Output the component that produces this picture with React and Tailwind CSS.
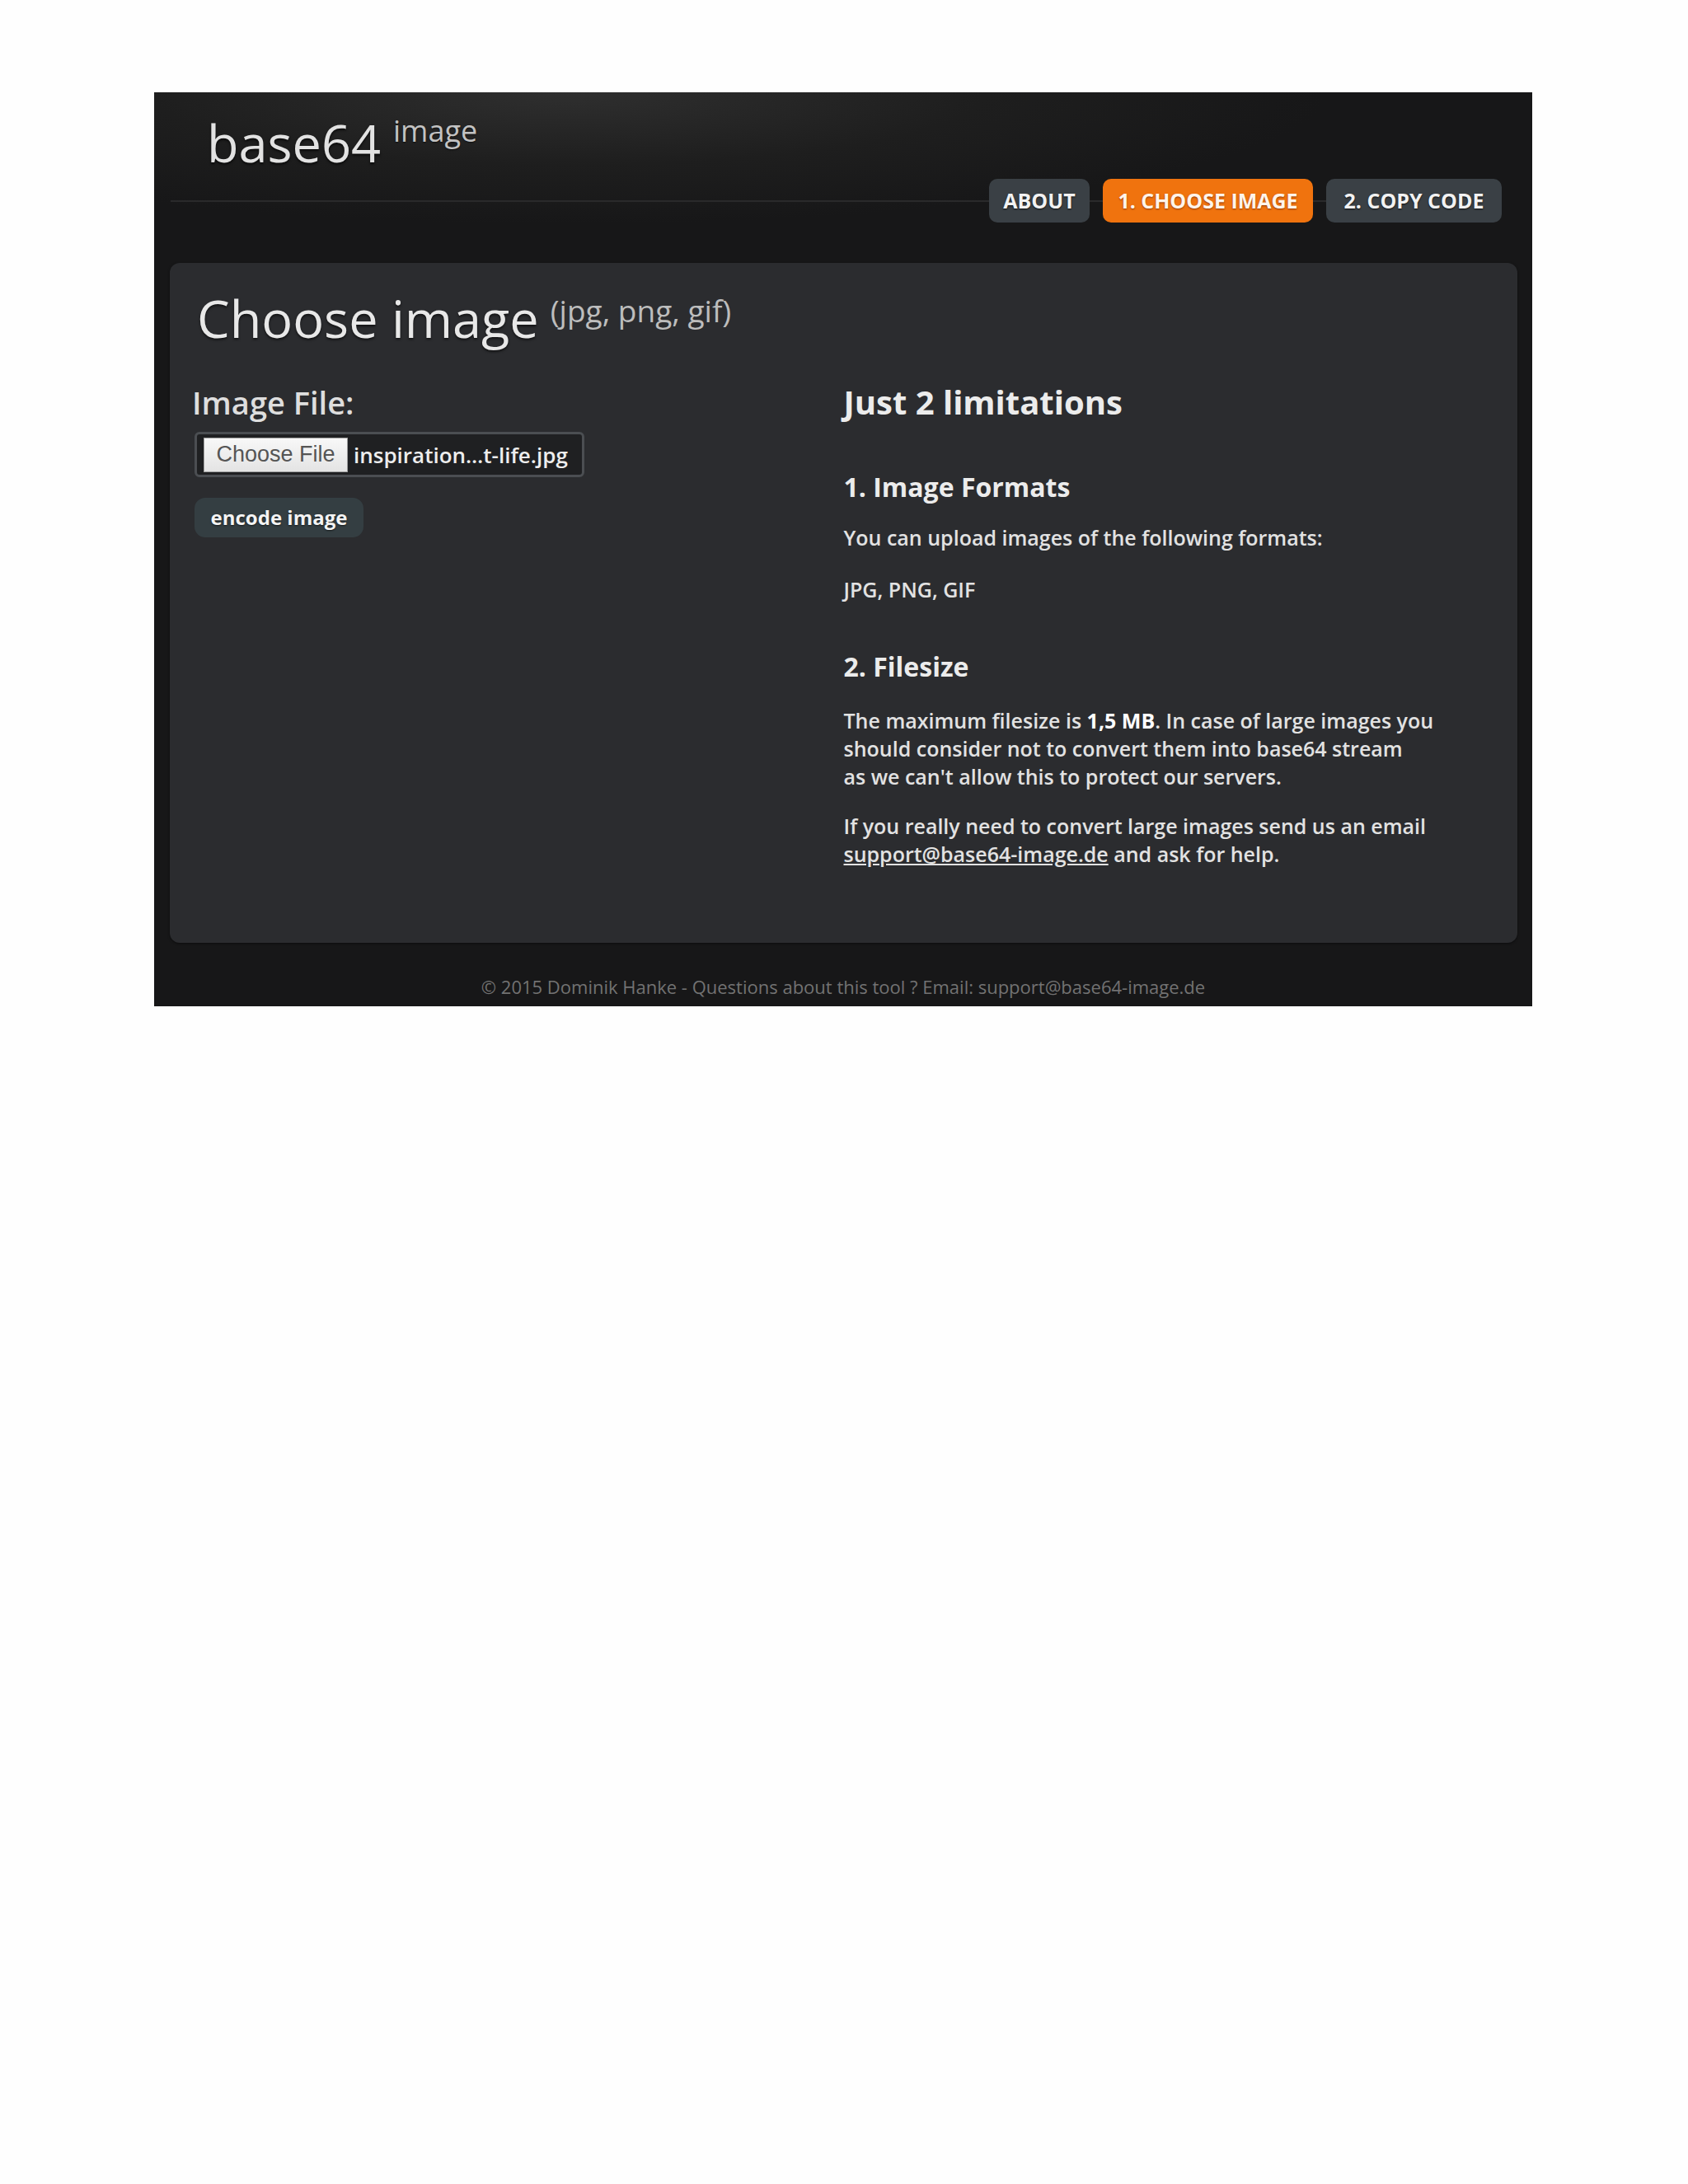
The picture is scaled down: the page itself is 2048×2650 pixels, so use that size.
export default function App() {
  return (
    <div className="min-h-[2650px] bg-[#fefefe] pt-[112px] pl-[187px] font-['Open_Sans',sans-serif]">
      <div className="w-[1672px] h-[1109px] bg-[#171718] flex flex-col">
        <header className="pt-[29px] pb-[2px] bg-[radial-gradient(ellipse_55%_100%_at_30%_0%,#2f2f2f_0%,#1e1e1e_55%,#171718_100%)]">
          <div className="flex items-start pl-[64px]">
            <span className="text-[63px] leading-[63px] text-[#e2e2e2] [text-shadow:0_2px_3px_rgba(0,0,0,0.7)]">base64</span>
            <span className="ml-[15px] text-[36px] leading-[36px] text-[#c2c2c2] [text-shadow:0_1px_2px_rgba(0,0,0,0.6)]">image</span>
          </div>
          <nav className="mt-[13px] ml-[20px] mr-[37px] flex items-center">
            <div className="flex-1 h-[2px] bg-[#2a2a2b]"></div>
            <a className="w-[122px] h-[53px] rounded-[10px] bg-[#3a4045] flex items-center justify-center text-[25px] font-bold text-[#f2f2f2] [text-shadow:0_1px_2px_rgba(0,0,0,0.8)]">ABOUT</a>
            <div className="w-[16px] h-[2px] bg-[#2a2a2b]"></div>
            <a className="w-[255px] h-[53px] rounded-[10px] bg-[#f0730e] flex items-center justify-center text-[25px] font-bold text-[#fff4ea] [text-shadow:0_1px_2px_rgba(120,40,0,0.8)]">1. CHOOSE IMAGE</a>
            <div className="w-[16px] h-[2px] bg-[#2a2a2b]"></div>
            <a className="w-[213px] h-[53px] rounded-[10px] bg-[#3a4045] flex items-center justify-center text-[25px] font-bold text-[#f2f2f2] [text-shadow:0_1px_2px_rgba(0,0,0,0.8)]">2. COPY CODE</a>
          </nav>
        </header>

        <main className="mt-[47px] ml-[19px] mr-[18px] rounded-[12px] bg-[#2b2c2f] shadow-[0_1px_3px_rgba(0,0,0,0.5)] pt-[35px] px-[30px] pb-[91px]">
          <h1 className="flex items-start pl-[3px]">
            <span className="text-[63px] leading-[63px] text-[#e8e8e8] [text-shadow:0_2px_3px_rgba(0,0,0,0.6)]">Choose image</span>
            <span className="ml-[14px] mt-[4px] text-[37px] leading-[37px] text-[#bdbdbd]">(jpg, png, gif)</span>
          </h1>

          <div className="mt-[51px] grid grid-cols-2">
            <div>
              <div className="-ml-[3px] mt-[1px] text-[38px] leading-[38px] font-semibold text-[#dedede]">Image File:</div>
              <div className="mt-[17px] w-[473px] h-[55px] rounded-[6px] border-[3px] border-[#4b4e52] bg-[#1f2022] flex items-center pl-[8px]">
                <div className="h-[42px] w-[175px] border border-[#a0a0a0] bg-[linear-gradient(#f8f8f8,#e4e4e4)] flex items-center justify-center font-['Liberation_Sans',Arial,sans-serif] text-[27px] text-[#555555]">Choose File</div>
                <span className="ml-[7px] text-[26px] leading-[30px] font-semibold text-[#eeeeee] whitespace-nowrap">inspiration…t-life.jpg</span>
              </div>
              <div className="mt-[25px] w-[205px] h-[48px] rounded-[13px] bg-[#343e42] flex items-center justify-center text-[24px] font-bold text-[#f4f4f4] [text-shadow:0_1px_2px_rgba(0,0,0,0.6)]">encode image</div>
            </div>

            <div className="text-[#e2e2e2]">
              <h2 className="text-[40px] leading-[40px] font-bold text-[#ececec] whitespace-nowrap">Just 2 limitations</h2>
              <h3 className="mt-[67px] text-[32px] leading-[32px] font-bold text-[#ececec]">1. Image Formats</h3>
              <p className="mt-[28px] text-[25px] leading-[34px] font-semibold whitespace-nowrap">You can upload images of the following formats:</p>
              <p className="mt-[29px] text-[25px] leading-[34px] font-semibold">JPG, PNG, GIF</p>
              <h3 className="mt-[61px] text-[32px] leading-[32px] font-bold text-[#ececec]">2. Filesize</h3>
              <p className="mt-[32px] text-[25px] leading-[34px] font-semibold whitespace-nowrap">
                The maximum filesize is <b className="font-bold text-white">1,5 MB</b>. In case of large images you<br />
                should consider not to convert them into base64 stream<br />
                as we can't allow this to protect our servers.
              </p>
              <p className="mt-[26px] text-[25px] leading-[34px] font-semibold whitespace-nowrap">
                If you really need to convert large images send us an email<br />
                <a className="underline">support@base64-image.de</a> and ask for help.
              </p>
            </div>
          </div>
        </main>

        <footer className="mt-[42px] text-center text-[22px] leading-[22px] text-[#727272]">
          © 2015 Dominik Hanke - Questions about this tool ? Email: support@base64-image.de
        </footer>
      </div>
    </div>
  );
}
